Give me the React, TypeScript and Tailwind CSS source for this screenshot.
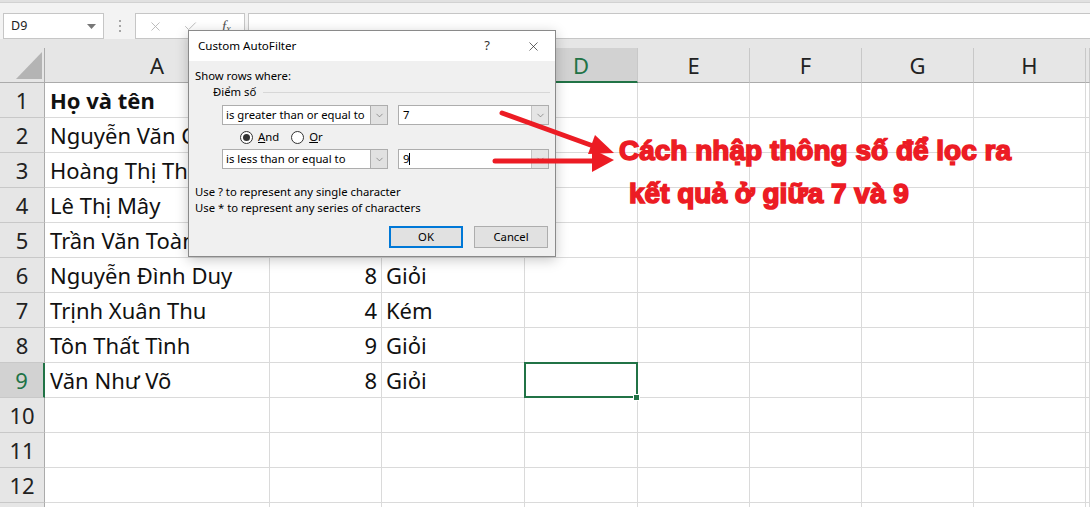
import { X, Check, ChevronDown } from "lucide-react";

type Row = { n: number; a: string; b: string; c: string; bold?: boolean };

// columns B and C of rows 1-5 sit under the dialog, so they are left blank
const rows: Row[] = [
  { n: 1, a: "Họ và tên", b: "", c: "", bold: true },
  { n: 2, a: "Nguyễn Văn Chung", b: "", c: "" },
  { n: 3, a: "Hoàng Thị Thu", b: "", c: "" },
  { n: 4, a: "Lê Thị Mây", b: "", c: "" },
  { n: 5, a: "Trần Văn Toàn", b: "", c: "" },
  { n: 6, a: "Nguyễn Đình Duy", b: "8", c: "Giỏi" },
  { n: 7, a: "Trịnh Xuân Thu", b: "4", c: "Kém" },
  { n: 8, a: "Tôn Thất Tình", b: "9", c: "Giỏi" },
  { n: 9, a: "Văn Như Võ", b: "8", c: "Giỏi" },
  { n: 10, a: "", b: "", c: "" },
  { n: 11, a: "", b: "", c: "" },
  { n: 12, a: "", b: "", c: "" },
  { n: 13, a: "", b: "", c: "" },
];

const gridCols =
  "grid grid-cols-[45px_225px_112px_143px_113px_112px_112px_112px_112px_4px]";

const letters = ["A", "B", "C", "D", "E", "F", "G", "H", ""];

function FormulaBar() {
  return (
    <>
      <div className="h-[3px] bg-[#e1e1e1] border-b border-[#d2d2d2]" />
      <div className="h-[36px] bg-[#f3f3f3] flex items-start pt-[10px]">
        {/* name box */}
        <div className="ml-[3px] w-[101px] h-[26px] bg-white border border-[#c6c6c6] flex items-center justify-between pl-[7px] pr-[7px] text-[12.5px] text-[#222]">
          <span>D9</span>
          <svg width="9" height="5" viewBox="0 0 9 5">
            <polygon points="0,0 9,0 4.5,5" fill="#777" />
          </svg>
        </div>
        {/* dots */}
        <div className="w-[31px] h-[26px] flex flex-col items-center justify-center gap-[3px]">
          <span className="w-[2px] h-[2px] bg-[#a6a6a6]" />
          <span className="w-[2px] h-[2px] bg-[#a6a6a6]" />
          <span className="w-[2px] h-[2px] bg-[#a6a6a6]" />
        </div>
        {/* cancel / enter / fx */}
        <div className="w-[110px] h-[26px] bg-white border border-[#c6c6c6] flex items-center pl-[2px]">
          <span className="w-[36px] flex justify-center">
            <X size={15} strokeWidth={1.4} color="#b3b3b3" />
          </span>
          <span className="w-[36px] flex justify-center">
            <Check size={15} strokeWidth={1.4} color="#b3b3b3" />
          </span>
          <span className="w-[36px] flex justify-center font-['Liberation_Serif',serif] italic text-[15px] text-[#555] leading-none">
            f<span className="text-[10px] mt-[5px]">x</span>
          </span>
        </div>
        {/* formula input */}
        <div className="ml-[3px] flex-1 h-[26px] bg-white border-y border-l border-[#c6c6c6]" />
      </div>
      <div className="h-[9px] bg-[#e6e6e6]" />
    </>
  );
}

function HeaderRow() {
  return (
    <div className={gridCols}>
      <div className="h-[35px] bg-[#e6e6e6] border-r border-b border-[#ababab] flex items-end justify-end pr-[2px] pb-[3px]">
        <svg width="26" height="27" viewBox="0 0 26 27">
          <polygon points="26,0 26,27 0,27" fill="#b4b4b4" />
        </svg>
      </div>
      {letters.map((l) =>
        l === "D" ? (
          <div
            key={l}
            className="h-[35px] bg-[#d2d2d2] border-r border-[#c8c8c8] border-b-2 border-b-[#217346] text-center text-[22px] leading-[34px] text-[#217346]"
          >
            {l}
          </div>
        ) : (
          <div
            key={l || "x"}
            className="h-[35px] bg-[#e6e6e6] border-r border-[#c8c8c8] border-b border-b-[#ababab] text-center text-[22px] leading-[34px] text-[#222]"
          >
            {l}
          </div>
        )
      )}
    </div>
  );
}

function DataRow({ row }: { row: Row }) {
  const sel = row.n === 9;
  const cell =
    "h-[35px] bg-white border-r border-b border-[#dadada] text-[22px] leading-[34px] text-[#111] whitespace-nowrap overflow-hidden";
  return (
    <div className={gridCols}>
      {sel ? (
        <div className="h-[35px] bg-[#d2d2d2] border-r-2 border-r-[#217346] border-b border-b-[#c8c8c8] text-center text-[22px] leading-[34px] text-[#217346]">
          {row.n}
        </div>
      ) : (
        <div className="h-[35px] bg-[#e6e6e6] border-r border-r-[#ababab] border-b border-b-[#c8c8c8] text-center text-[22px] leading-[34px] text-[#222]">
          {row.n < 13 ? row.n : ""}
        </div>
      )}
      <div className={`${cell} pl-[5px] ${row.bold ? "font-bold" : ""}`}>{row.a}</div>
      <div className={`${cell} pr-[4px] text-right`}>{row.b}</div>
      <div className={`${cell} pl-[4px]`}>{row.c}</div>
      {sel ? (
        <div className="h-[35px] bg-white border-r border-b border-[#dadada] relative">
          <div className="absolute -left-[1px] -top-[1px] w-[114px] h-[36px] border-2 border-[#217346]" />
          <div className="absolute -right-[3px] -bottom-[4px] w-[7px] h-[7px] bg-[#217346] border border-white" />
        </div>
      ) : (
        <div className={cell} />
      )}
      <div className={cell} />
      <div className={cell} />
      <div className={cell} />
      <div className={cell} />
      <div className={cell} />
    </div>
  );
}

function Combo({ text, w }: { text: string; w: string }) {
  return (
    <div className={`${w} h-[20px] bg-white border border-[#adadad] flex`}>
      <span className="flex-1 pl-[3px] leading-[18px] whitespace-nowrap">{text}</span>
      <span className="w-[17px] bg-[#e1e1e1] border-l border-[#adadad] flex items-center justify-center">
        <ChevronDown size={11} strokeWidth={1.3} color="#606060" />
      </span>
    </div>
  );
}

function ValueBox({ value, caret }: { value: string; caret?: boolean }) {
  return (
    <div className="w-[151px] h-[20px] bg-white border border-[#adadad] flex">
      <span className="flex-1 pl-[4px] leading-[18px] flex items-center">
        {value}
        {caret && <span className="w-px h-[12px] bg-black" />}
      </span>
      <span className="w-[17px] bg-[#e5e5e5] border-l border-[#c4c4c4] flex items-center justify-center">
        <ChevronDown size={11} strokeWidth={1.3} color="#606060" />
      </span>
    </div>
  );
}

function AutoFilterDialog() {
  return (
    <div className="absolute left-[188px] top-[30px] w-[368px] h-[227px] border border-[#8a8a8a] bg-[#f0f0f0] shadow-[0_3px_12px_rgba(0,0,0,0.22)] text-[11.3px] text-black font-['Noto_Sans',sans-serif]">
      <div className="h-[30px] bg-white flex items-center pl-[9px]">
        <span className="text-[11.6px]">Custom AutoFilter</span>
        <span className="ml-auto w-[48px] text-center text-[13px] text-[#333]">?</span>
        <span className="w-[44px] flex justify-center">
          <X size={15} strokeWidth={1.1} color="#222" />
        </span>
      </div>
      <div className="pl-[6px]">
        <div className="mt-[7px] h-[16px] leading-[16px]">Show rows where:</div>
        <div className="h-[16px] leading-[16px] flex items-center pl-[18px]">
          <span>Điểm số</span>
          <span className="flex-1 h-px bg-[#d7d7d7] ml-[7px] mr-[5px]" />
        </div>
        <div className="mt-[5px] ml-[27px] flex gap-[10px]">
          <Combo text="is greater than or equal to" w="w-[166px]" />
          <ValueBox value="7" />
        </div>
        <div className="h-[24px] flex items-center">
          <span className="ml-[45px] w-[13px] h-[13px] rounded-full border border-[#333] bg-white flex items-center justify-center">
            <span className="w-[7px] h-[7px] rounded-full bg-[#333]" />
          </span>
          <span className="ml-[5px]">
            <span className="underline">A</span>nd
          </span>
          <span className="ml-[12px] w-[13px] h-[13px] rounded-full border border-[#333] bg-white" />
          <span className="ml-[5px]">
            <span className="underline">O</span>r
          </span>
        </div>
        <div className="ml-[27px] flex gap-[10px]">
          <Combo text="is less than or equal to" w="w-[166px]" />
          <ValueBox value="9" caret />
        </div>
        <div className="mt-[15px] h-[16px] leading-[16px]">Use ? to represent any single character</div>
        <div className="h-[16px] leading-[16px]">Use * to represent any series of characters</div>
        <div className="mt-[10px] flex justify-end gap-[11px] pr-[7px]">
          <div className="w-[74px] h-[22px] bg-[#e1e1e1] border-2 border-[#0078d7] flex items-center justify-center">
            OK
          </div>
          <div className="w-[74px] h-[22px] bg-[#e1e1e1] border border-[#adadad] flex items-center justify-center">
            Cancel
          </div>
        </div>
      </div>
    </div>
  );
}

function Arrows() {
  return (
    <svg className="absolute left-0 top-0 pointer-events-none" width="1090" height="507">
      <line x1="502" y1="113" x2="596" y2="147" stroke="#ec1c24" strokeWidth="5" strokeLinecap="round" />
      <polygon points="614,153 588,154 595,135" fill="#ec1c24" />
      <line x1="495" y1="161" x2="596" y2="161" stroke="#ec1c24" strokeWidth="5" strokeLinecap="round" />
      <polygon points="614,160 592,149 592,172" fill="#ec1c24" />
    </svg>
  );
}

export default function App() {
  return (
    <div className="relative w-[1090px] h-[507px] overflow-hidden bg-white font-['Noto_Sans',sans-serif]">
      <FormulaBar />
      <HeaderRow />
      {rows.map((r) => (
        <DataRow key={r.n} row={r} />
      ))}
      <AutoFilterDialog />
      <Arrows />
      <div className="absolute left-[619px] top-[129px] text-[28px] leading-[43px] font-bold text-[#ec1c24] font-['Liberation_Sans',Arial,sans-serif] [-webkit-text-stroke:1.6px_#ec1c24] whitespace-nowrap">
        <div>Cách nhập thông số để lọc ra</div>
        <div className="pl-[10px]">kết quả ở giữa 7 và 9</div>
      </div>
    </div>
  );
}
